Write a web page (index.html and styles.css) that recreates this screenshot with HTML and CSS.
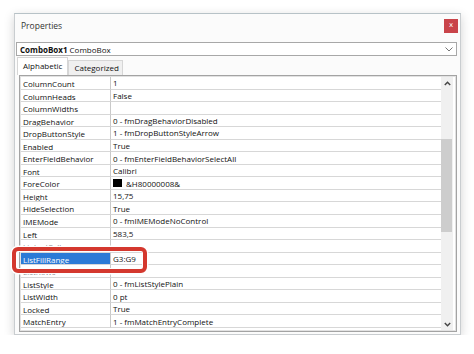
FILE: index.html
```html
<!DOCTYPE html>
<html lang="en">
<head>
  <meta charset="UTF-8" />
  <title>Properties</title>
  <link rel="stylesheet" href="styles.css">
</head>
<body>
  <div class="window">
    <div class="titlebar">
      <span class="title">Properties</span>
      <span class="close">x</span>
    </div>

    <div class="combo">
      <span class="combo-text"><b>ComboBox1</b> ComboBox</span>
      <svg class="combo-arrow" width="8" height="5" viewBox="0 0 8 5">
        <polyline points="0.5,0.5 4,4 7.5,0.5" fill="none" stroke="#777" stroke-width="1"/>
      </svg>
    </div>

    <div class="tabs">
      <div class="tab active">Alphabetic</div>
      <div class="tab">Categorized</div>
    </div>

    <div class="grid">
      <div class="rows">
        <div class="row"><div class="name">ColumnCount</div><div class="value">1</div></div>
        <div class="row"><div class="name">ColumnHeads</div><div class="value">False</div></div>
        <div class="row"><div class="name">ColumnWidths</div><div class="value"></div></div>
        <div class="row"><div class="name">DragBehavior</div><div class="value">0 - fmDragBehaviorDisabled</div></div>
        <div class="row"><div class="name">DropButtonStyle</div><div class="value">1 - fmDropButtonStyleArrow</div></div>
        <div class="row"><div class="name">Enabled</div><div class="value">True</div></div>
        <div class="row"><div class="name">EnterFieldBehavior</div><div class="value">0 - fmEnterFieldBehaviorSelectAll</div></div>
        <div class="row"><div class="name">Font</div><div class="value">Calibri</div></div>
        <div class="row"><div class="name">ForeColor</div><div class="value"><span class="swatch"></span>&amp;H80000008&amp;</div></div>
        <div class="row"><div class="name">Height</div><div class="value">15,75</div></div>
        <div class="row"><div class="name">HideSelection</div><div class="value">True</div></div>
        <div class="row"><div class="name">IMEMode</div><div class="value">0 - fmIMEModeNoControl</div></div>
        <div class="row"><div class="name">Left</div><div class="value">583,5</div></div>
        <div class="row"><div class="name">LinkedCell</div><div class="value"></div></div>
        <div class="row selected"><div class="name">ListFillRange</div><div class="value">G3:G9</div></div>
        <div class="row"><div class="name">ListRows</div><div class="value">8</div></div>
        <div class="row"><div class="name">ListStyle</div><div class="value">0 - fmListStylePlain</div></div>
        <div class="row"><div class="name">ListWidth</div><div class="value">0 pt</div></div>
        <div class="row"><div class="name">Locked</div><div class="value">True</div></div>
        <div class="row"><div class="name">MatchEntry</div><div class="value">1 - fmMatchEntryComplete</div></div>
      </div>
      <div class="scrollbar">
        <svg class="arrow" width="7" height="5" viewBox="0 0 7 5">
          <polyline points="0.8,4 3.5,1.2 6.2,4" fill="none" stroke="#444" stroke-width="1.4"/>
        </svg>
        <div class="track"><div class="thumb"></div></div>
        <svg class="arrow" width="7" height="5" viewBox="0 0 7 5">
          <polyline points="0.8,1 3.5,3.8 6.2,1" fill="none" stroke="#444" stroke-width="1.4"/>
        </svg>
      </div>
    </div>

    <div class="callout"></div>
  </div>
</body>
</html>
```

FILE: styles.css
```css
body {
  margin: 0;
  background: #fff;
  font-family: "Open Sans", "Noto Sans", sans-serif;
  color: #111;
}
.window {
  position: relative;
  margin: 13px 0 0 14px;
  width: 442px;
  height: 320px;
  border: 1px solid #c9cdd0;
  border-top-color: #b7c2c7;
  background: #fbfbfb;
  box-shadow: 0 3px 10px rgba(0,0,0,0.18);
  padding: 0 2px 0 1px;
  box-sizing: content-box;
}
.titlebar {
  display: flex;
  justify-content: space-between;
  align-items: flex-start;
  height: 28px;
}
.title {
  font-size: 8.5px;
  margin: 6px 0 0 5px;
  color: #333;
}
.close {
  width: 14px;
  height: 14px;
  margin-top: 5px;
  background: #c9444a;
  color: #fff;
  font-size: 7px;
  line-height: 13px;
  text-align: center;
  font-family: "DejaVu Sans", sans-serif;
}
.combo {
  display: flex;
  justify-content: space-between;
  align-items: center;
  height: 12px;
  margin-right: 1px;
  border: 1px solid #a8a8a8;
  background: #fff;
  padding: 0 3px 0 3px;
  font-size: 8px;
}
.combo b {
  font-weight: 700;
}
.tabs {
  display: flex;
  align-items: flex-end;
  height: 19px;
  padding-left: 1px;
}
.tab {
  font-size: 8px;
  height: 14px;
  line-height: 13px;
  padding: 0 3px 0 5px;
  border: 1px solid #d6d6d6;
  border-bottom: none;
  background: #f0f0f0;
}
.tab.active {
  height: 17px;
  line-height: 15px;
  background: #fff;
  padding: 0 5px;
}
.grid {
  display: flex;
  margin: 0 1px 0 3px;
  height: 253px;
  border: 1px solid #a3a3a3;
  box-shadow: inset 0 0 0 1px #e2e2e2;
  padding: 1px;
  background: #fff;
}
.rows {
  flex: 1;
}
.row {
  display: grid;
  grid-template-columns: 90px 1fr;
  height: 12.55px;
  font-size: 8px;
  line-height: 13px;
}
.name, .value {
  border-bottom: 1px solid #d7d7d7;
  white-space: nowrap;
  overflow: hidden;
  box-sizing: border-box;
}
.name {
  padding-left: 2px;
  border-right: 1px solid #c9c9c9;
}
.value {
  padding-left: 2px;
  display: flex;
  align-items: center;
}
.row.selected .name {
  background: #2c7ad6;
  color: #fff;
}
.swatch {
  display: inline-block;
  width: 9px;
  height: 8px;
  background: #000;
  margin-right: 4px;
}
.scrollbar {
  width: 12px;
  display: flex;
  flex-direction: column;
  align-items: center;
  background: #f0f0f0;
  margin-right: 2px;
}
.arrow {
  margin: 4px 0 3px;
}
.track {
  flex: 1;
  width: 100%;
}
.thumb {
  margin-top: 50px;
  height: 93px;
  width: 11px;
  background: #cdcdcd;
}
.callout {
  position: absolute;
  left: -3px;
  top: 233px;
  width: 127px;
  height: 18px;
  border: 4px solid #d4382e;
  border-radius: 6px;
  box-shadow: 0 0 0 1.5px #fff, inset 0 0 0 1px #fff;
}
```
